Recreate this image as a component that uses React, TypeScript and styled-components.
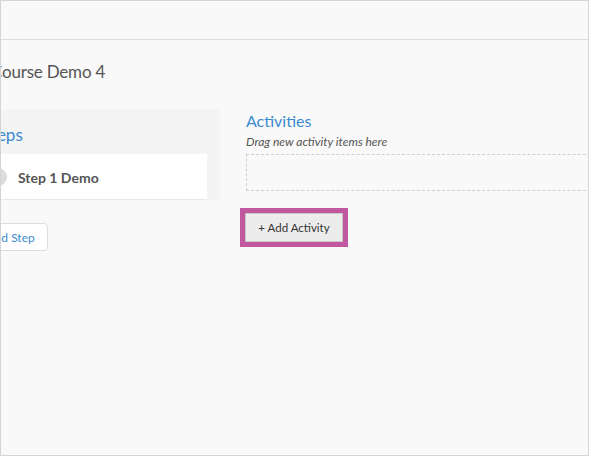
import React from "react";
import styled, { createGlobalStyle } from "styled-components";

const Global = createGlobalStyle`
  html, body { margin: 0; padding: 0; background: #f9f9f9; }
  * { box-sizing: border-box; }
  body { font-family: Lato, "Open Sans", sans-serif; color: #555; }
`;

const Frame = styled.div`
  width: 589px;
  height: 456px;
  border: 1px solid #d4d4d4;
  background: #f9f9f9;
  overflow: hidden;
`;

const TopBar = styled.div`
  height: 39px;
  border-bottom: 1px solid #dedede;
`;

const Content = styled.div`
  margin-left: -31px;
  display: flex;
  flex-direction: column;
`;

const Title = styled.h1`
  margin: 21px 0 0 21px;
  font-size: 17px;
  font-weight: 400;
  line-height: 22px;
  color: #555;
  letter-spacing: -0.2px;
`;

const Columns = styled.div`
  display: flex;
  margin-top: 26px;
  align-items: flex-start;
`;

const StepsCol = styled.div`
  flex: none;
  width: 250px;
  display: flex;
  flex-direction: column;
`;

const StepsPanel = styled.div`
  background: #f4f4f4;
  padding: 15px 13px 0 12px;
  height: 91px;
`;

const Heading = styled.h2<{ $size?: number }>`
  margin: 0;
  font-size: ${(p) => p.$size ?? 17}px;
  font-weight: 400;
  line-height: 22px;
  color: #3a8bd0;
`;

const StepCard = styled.div`
  margin: 8px 0 0 2px;
  background: #fff;
  height: 46px;
  border-bottom: 1px solid #e8e8e8;
  display: flex;
  align-items: center;
  padding: 1px 0 0 5px;
  gap: 11px;
`;

const Handle = styled.span`
  width: 18px;
  height: 18px;
  border-radius: 50%;
  background: #dcdcdc;
  flex: none;
`;

const StepName = styled.span`
  font-size: 14px;
  font-weight: 700;
  color: #555;
`;

const AddStep = styled.button`
  align-self: flex-start;
  margin: 23px 0 0 -6px;
  height: 28px;
  padding: 0 12px;
  border: 1px solid #dddddd;
  border-radius: 4px;
  background: #fff;
  color: #3a8bd0;
  font-family: Lato, sans-serif;
  font-size: 12px;
`;

const ActivitiesCol = styled.div`
  margin-left: 26px;
  margin-top: 1px;
  flex: 1;
  display: flex;
  flex-direction: column;
`;

const Hint = styled.div`
  font-size: 12px;
  font-style: italic;
  color: #555;
  margin-top: 3px;
  line-height: 14px;
`;

const DropZone = styled.div`
  margin-top: 5px;
  height: 37px;
  width: 400px;
  border: 1px dashed #cfcfcf;
`;

const AddActivity = styled.button`
  align-self: flex-start;
  margin: 22px 0 0 -1px;
  width: 98px;
  height: 29px;
  background: #ececec;
  border: 1px solid #c8c8c8;
  color: #333;
  font-family: Lato, sans-serif;
  font-size: 11.5px;
  outline: 5px solid #c0579f;
  outline-offset: 0px;
`;

export default function App() {
  return (
    <>
      <Global />
      <Frame>
        <TopBar />
        <Content>
          <Title>Course Demo 4</Title>
          <Columns>
            <StepsCol>
              <StepsPanel>
                <Heading>Steps</Heading>
                <StepCard>
                  <Handle />
                  <StepName>Step 1 Demo</StepName>
                </StepCard>
              </StepsPanel>
              <AddStep>+ Add Step</AddStep>
            </StepsCol>
            <ActivitiesCol>
              <Heading $size={16}>Activities</Heading>
              <Hint>Drag new activity items here</Hint>
              <DropZone />
              <AddActivity>+ Add Activity</AddActivity>
            </ActivitiesCol>
          </Columns>
        </Content>
      </Frame>
    </>
  );
}
